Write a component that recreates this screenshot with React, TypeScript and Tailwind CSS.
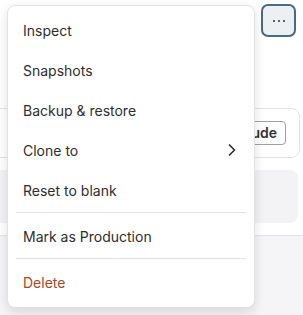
import React from "react";

const items = ["Inspect", "Snapshots", "Backup & restore", "Clone to", "Reset to blank"];

export default function App() {
  return (
    <div
      className="relative w-[303px] h-[315px] overflow-hidden bg-white flex flex-col"
      style={{ fontFamily: "Inter, 'Noto Sans', sans-serif" }}
    >
      <div className="pt-[4px] pr-[7px] flex justify-end">
        <button className="w-[35px] h-[33px] rounded-[7px] border-2 border-[#4a6a7e] bg-[#edf0f3] flex items-center justify-center gap-[3px]">
          <span className="w-[2px] h-[2px] rounded-full bg-[#333]" />
          <span className="w-[2px] h-[2px] rounded-full bg-[#333]" />
          <span className="w-[2px] h-[2px] rounded-full bg-[#333]" />
        </button>
      </div>
      <div className="mt-[71px] ml-[-10px] mr-[3px] h-[50px] border border-[#e3e3e6] rounded-lg flex items-center justify-end pr-[13px]">
        <button className="h-[24px] px-2 border border-[#a0a0a0] rounded-[4px] text-[14px] font-semibold text-[#333] leading-none">
          Exclude
        </button>
      </div>
      <div className="mt-3 ml-[-10px] mr-[5px] h-[53px] rounded-lg bg-[#f3f3f5]" />
      <div className="mt-3 border-t border-[#e3e3e6] flex-1 bg-[#f5f5f7]" />

      <div className="absolute left-[7px] top-[5px] w-[248px] bg-white border border-[#e2e2e5] rounded-lg shadow-[0_4px_12px_rgba(0,0,0,0.12)] pt-[4px] pb-[5px]">
        {items.map((t) => (
          <div key={t} className="h-10 mx-2 px-[7px] flex items-center justify-between text-[14px] text-[#2e2e2e]">
            <span>{t}</span>
            {t === "Clone to" && (
              <svg width="20" height="20" viewBox="0 0 24 24" fill="none" stroke="#2e2e2e" strokeWidth="2" strokeLinecap="round" strokeLinejoin="round" className="mr-[-3px]">
                <path d="m9 18 6-6-6-6" />
              </svg>
            )}
          </div>
        ))}
        <div className="mx-2 mt-[2px] mb-[3px] h-px bg-[#e2e2e5]" />
        <div className="h-10 mx-2 px-[7px] flex items-center text-[14px] text-[#2e2e2e]">Mark as Production</div>
        <div className="mx-2 mt-[2px] mb-[3px] h-px bg-[#e2e2e5]" />
        <div className="h-10 mx-2 px-[7px] flex items-center text-[14px] text-[#a2492d]">Delete</div>
      </div>
    </div>
  );
}
